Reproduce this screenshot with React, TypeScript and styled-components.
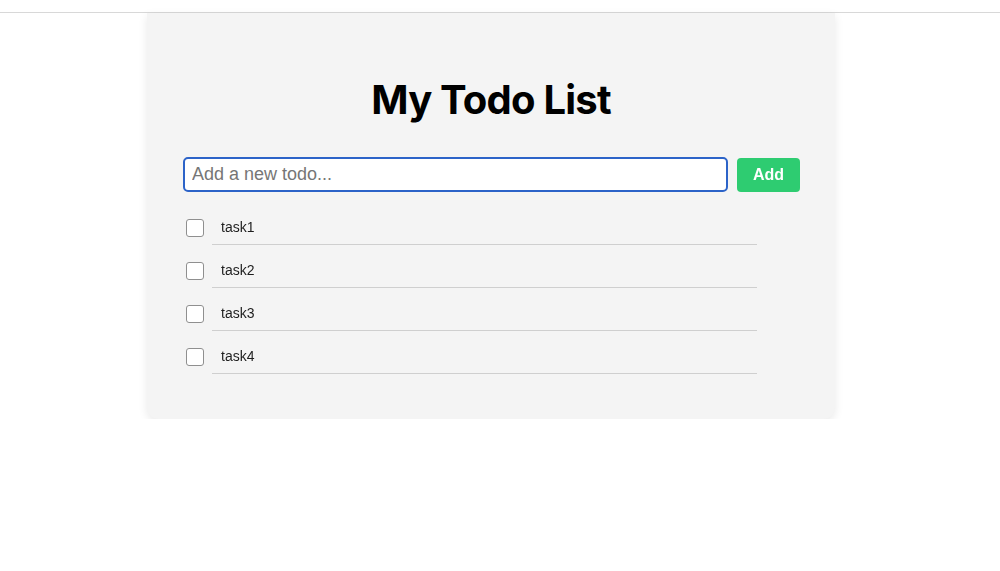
import React, { useState } from 'react';
import styled, { createGlobalStyle } from 'styled-components';

const GlobalStyle = createGlobalStyle`
  html, body {
    margin: 0;
    padding: 0;
    background: #ffffff;
    font-family: "Liberation Sans", Arial, sans-serif;
  }
`;

const TopBar = styled.div`
  height: 12px;
  border-bottom: 1px solid #d8d8d8;
`;

const Page = styled.main`
  display: flex;
  justify-content: center;
  padding-right: 18px;
`;

const Card = styled.section`
  width: 688px;
  box-sizing: border-box;
  padding: 36px;
  background: #f4f4f4;
  border-radius: 0 0 12px 12px;
  box-shadow: 0 3px 10px rgba(0, 0, 0, 0.09);
`;

const Title = styled.h1`
  margin: 26px 0 33px;
  text-align: center;
  font-family: Inter, "Noto Sans", sans-serif;
  font-size: 40px;
  font-weight: 700;
  letter-spacing: -0.8px;
  color: #000;
`;

const Form = styled.form`
  display: flex;
  align-items: center;
  gap: 9px;
  margin-bottom: 19px;
`;

const Input = styled.input`
  flex: none;
  width: 545px;
  box-sizing: border-box;
  height: 35px;
  padding: 5px 7px;
  border: 2px solid #2c63c8;
  border-radius: 5px;
  background: #fff;
  font-family: "Liberation Sans", Arial, sans-serif;
  font-size: 18px;
  color: #222;
  outline: none;

  &::placeholder {
    color: #767676;
  }
`;

const AddButton = styled.button`
  height: 34px;
  padding: 0 16px;
  border: none;
  border-radius: 4px;
  background: #2ecc71;
  color: #fff;
  font-family: "Liberation Sans", Arial, sans-serif;
  font-size: 16px;
  font-weight: 700;
  cursor: pointer;
`;

const List = styled.ul`
  list-style: none;
  margin: 0;
  padding: 0;
`;

const Row = styled.li`
  display: flex;
  align-items: center;
  margin-bottom: 9px;
`;

const Check = styled.input.attrs({ type: 'checkbox' })`
  appearance: none;
  flex: none;
  width: 18px;
  height: 18px;
  margin: 0 8px 0 3px;
  border: 1px solid #8f8f8f;
  border-radius: 3px;
  background: #fff;
  box-sizing: border-box;
  cursor: pointer;

  &:checked {
    background: #2c63c8;
    border-color: #2c63c8;
  }
`;

const Label = styled.span<{ $done: boolean }>`
  flex: none;
  width: 545px;
  box-sizing: border-box;
  padding: 8px 9px;
  border-bottom: 1px solid #cfcfcf;
  font-size: 14px;
  line-height: 17px;
  color: #1e1e1e;
  text-decoration: ${({ $done }) => ($done ? 'line-through' : 'none')};
`;

export default function App() {
  const [todos, setTodos] = useState([
    { id: 1, text: 'task1', done: false },
    { id: 2, text: 'task2', done: false },
    { id: 3, text: 'task3', done: false },
    { id: 4, text: 'task4', done: false },
  ]);
  const [draft, setDraft] = useState('');

  const addTodo = (e: React.FormEvent) => {
    e.preventDefault();
    if (!draft.trim()) return;
    setTodos([...todos, { id: Date.now(), text: draft.trim(), done: false }]);
    setDraft('');
  };

  const toggle = (id: number) =>
    setTodos(todos.map((t) => (t.id === id ? { ...t, done: !t.done } : t)));

  return (
    <>
      <GlobalStyle />
      <TopBar />
      <Page>
        <Card>
          <Title>My Todo List</Title>
          <Form onSubmit={addTodo}>
            <Input
              autoFocus
              placeholder="Add a new todo..."
              value={draft}
              onChange={(e) => setDraft(e.target.value)}
            />
            <AddButton type="submit">Add</AddButton>
          </Form>
          <List>
            {todos.map((t) => (
              <Row key={t.id}>
                <Check checked={t.done} onChange={() => toggle(t.id)} />
                <Label $done={t.done}>{t.text}</Label>
              </Row>
            ))}
          </List>
        </Card>
      </Page>
    </>
  );
}
